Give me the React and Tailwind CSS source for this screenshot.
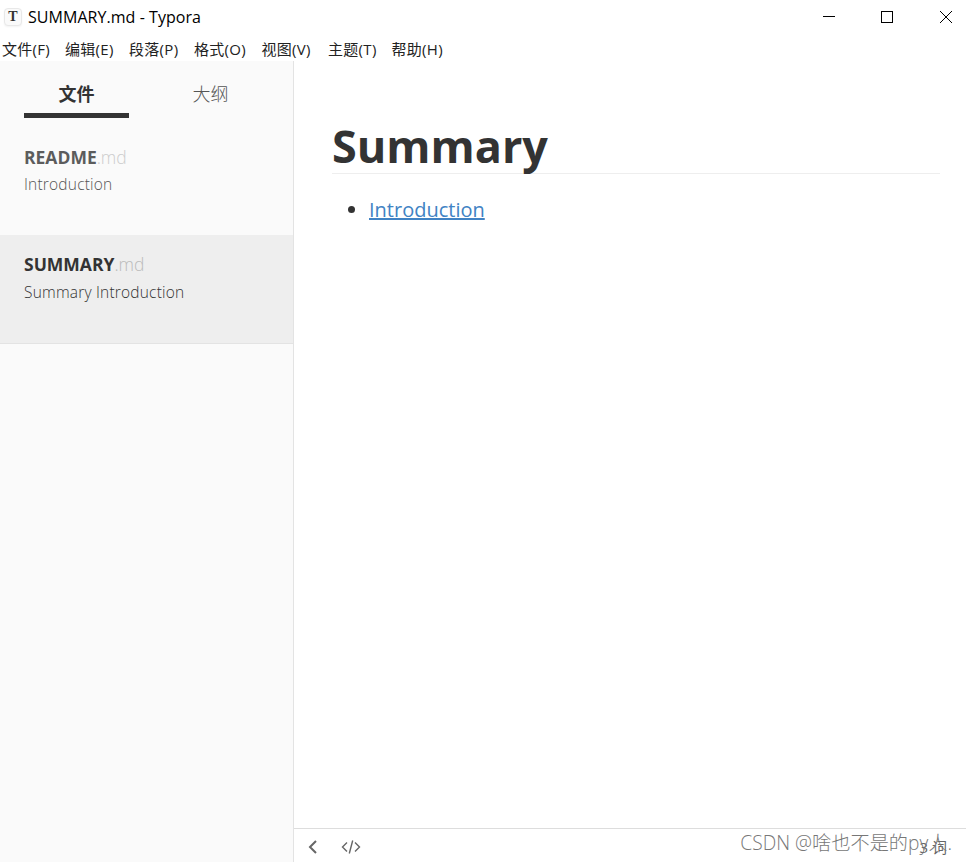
import React from 'react';

const menus = [
  { label: '文件(F)', width: 'w-[63px]' },
  { label: '编辑(E)', width: 'w-[64px]' },
  { label: '段落(P)', width: 'w-[65px]' },
  { label: '格式(O)', width: 'w-[67.5px]' },
  { label: '视图(V)', width: 'w-[66.5px]' },
  { label: '主题(T)', width: 'w-[63.5px]' },
  { label: '帮助(H)', width: 'w-[64px]' },
];

const files = [
  { name: 'README', summary: 'Introduction', active: false },
  { name: 'SUMMARY', summary: 'Summary Introduction', active: true },
];

const TitleBar = () => (
  <header className="flex h-[35px] shrink-0 items-center justify-between pb-px">
    <div className="flex items-center">
      <div className="ml-1 flex h-[18px] w-[18px] items-center justify-center rounded border border-[#e8e8e8] bg-[#fafafa] font-['Liberation_Serif',serif] text-[14px] leading-none font-bold text-[#333] shadow-xs">
        T
      </div>
      <h1 className="ml-1.5 text-[16px] leading-[22px] tracking-[0.05px] whitespace-nowrap text-black">
        SUMMARY.md - Typora
      </h1>
    </div>
    <div className="flex items-center pr-3.5">
      <svg className="h-3 w-3" viewBox="0 0 12 12" fill="none" stroke="#000" shapeRendering="crispEdges">
        <path d="M0 5.5H12" />
      </svg>
      <svg className="ml-[46px] h-3 w-3" viewBox="0 0 12 12" fill="none" stroke="#000" shapeRendering="crispEdges">
        <rect x="0.5" y="0.5" width="11" height="11" />
      </svg>
      <svg className="ml-[47px] h-3 w-3" viewBox="0 0 12 12" fill="none" stroke="#000">
        <path d="M0 0L12 12M12 0L0 12" />
      </svg>
    </div>
  </header>
);

const MenuBar = () => (
  <nav className="flex h-[26px] shrink-0 pt-0.5 pl-0.5">
    {menus.map(({ label, width }) => (
      <span
        key={label}
        className={`${width} shrink-0 text-[15px] leading-[24px] tracking-[0.3px] whitespace-nowrap text-[#222]`}
      >
        {label}
      </span>
    ))}
  </nav>
);

const FileItem = ({ name, summary, active }) => (
  <li
    className={
      active
        ? 'h-[109px] border-b border-[#e3e3e3] bg-[#eee] px-6 pt-[17px] text-[#333]'
        : 'h-[107px] px-6 pt-[17px] text-[#5c5c5c]'
    }
  >
    <div className="h-6 text-[17.5px] leading-6 whitespace-nowrap">
      <span className="font-bold">{name}</span>
      <span className={active ? 'font-light text-[#bbb]' : 'font-light text-[#ccc]'}>.md</span>
    </div>
    <div
      className={
        active
          ? 'mt-1 text-[15.5px] leading-6 font-light tracking-[0.2px] text-[#333]'
          : 'mt-[3px] text-[15.5px] leading-6 font-light tracking-[0.2px] text-[#555]'
      }
    >
      {summary}
    </div>
  </li>
);

const Sidebar = () => (
  <aside className="w-[294px] shrink-0 border-r border-[#e3e3e3] bg-[#fafafa]">
    <div className="flex h-[67px] px-6 pt-[17px] text-lg leading-8">
      <div className="h-10 w-[105px] border-b-[5px] border-[#333] text-center font-bold text-[#333]">文件</div>
      <div className="ml-[29px] w-[105px] text-center font-light text-[#555]">大纲</div>
    </div>
    <ul>
      {files.map((file) => (
        <FileItem key={file.name} {...file} />
      ))}
    </ul>
  </aside>
);

const StatusBar = () => (
  <footer className="relative flex h-[34px] shrink-0 items-center border-t border-[#ddd] pt-0.5 text-[#666]">
    <svg className="ml-[14px] h-3.5 w-2.5" viewBox="0 0 10 14" fill="none" stroke="currentColor" strokeWidth="2">
      <path d="M8 1L2 7L8 13" />
    </svg>
    <svg className="ml-[23px] h-3.5 w-5" viewBox="0 0 20 14" fill="none" stroke="currentColor" strokeWidth="1.4">
      <path d="M6 2.5L1.5 7L6 11.5M14 2.5L18.5 7L14 11.5M11.7 0.5L8.3 13.5" />
    </svg>
    <span className="ml-auto pr-[19px] text-[15px] leading-6 text-[#666]">3 词</span>
    <span className="absolute top-0 right-[14px] text-[19.2px] leading-[28px] font-light whitespace-nowrap text-[#777]">
      CSDN @啥也不是的py人.
    </span>
  </footer>
);

const App = () => {
  return (
    <div className="flex h-screen w-full flex-col overflow-hidden bg-white font-['Open_Sans','Noto_Sans_CJK_SC',sans-serif]">
      <TitleBar />
      <MenuBar />
      <div className="flex min-h-0 flex-1">
        <Sidebar />
        <div className="flex min-w-0 flex-1 flex-col">
          <main className="flex-1 pt-[58px] pr-[26px] pl-[38px] text-[#333]">
            <h2 className="h-[55px] border-b border-[#eee] text-[45px] leading-[54px] font-bold">Summary</h2>
            <ul className="mt-5 list-disc pl-[37px] text-xl leading-8">
              <li>
                <a href="#introduction" className="text-[#4183c4] underline">
                  Introduction
                </a>
              </li>
            </ul>
          </main>
          <StatusBar />
        </div>
      </div>
    </div>
  );
};

export default App;
